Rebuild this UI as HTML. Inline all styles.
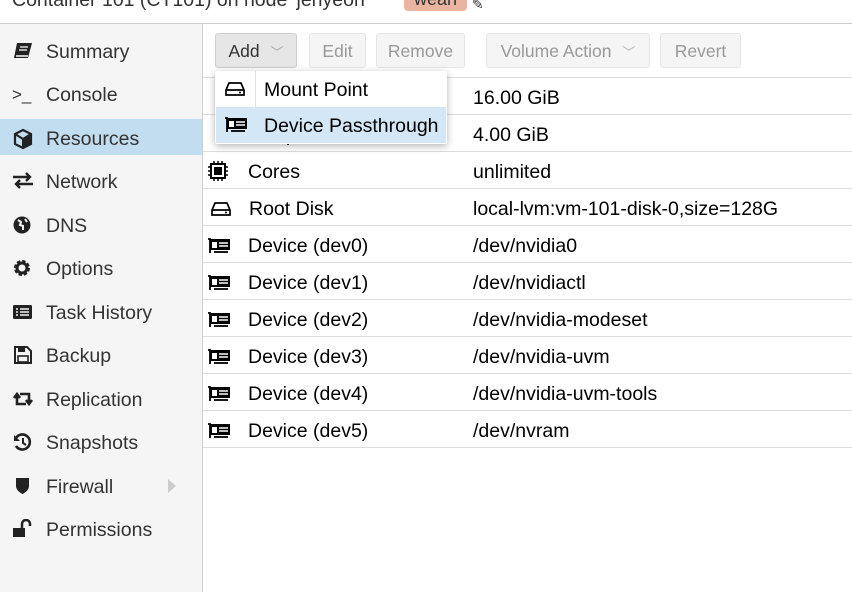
<!DOCTYPE html>
<html><head><meta charset="utf-8"><style>
*{box-sizing:border-box;margin:0;padding:0}
body{width:852px;height:592px;overflow:hidden;background:#fff;font-family:"Liberation Sans",sans-serif;position:relative;color:#000}
.hdr{position:absolute;left:0;top:0;width:852px;height:24px;border-bottom:1px solid #ccc;background:#fff}
.hdr .t{position:absolute;left:12px;top:-11px;font-size:19.5px;color:#333;white-space:nowrap}
.tag{position:absolute;left:404px;top:-6px;width:63px;height:17px;background:#eab5a0;border-radius:4px;font-size:18px;color:#333;text-align:center;line-height:10px;overflow:hidden}
.side{position:absolute;left:0;top:24px;width:203px;height:568px;background:#f5f5f5;border-right:1px solid #cfcfcf}
.it{position:absolute;left:0;width:202px;height:36px;font-size:19.5px;color:#333;line-height:40px}
.it span{position:absolute;left:46px}
.it svg{position:absolute;left:12px;top:9px}
.sel{background:#c2dcf0}
.btn{position:absolute;top:33px;height:35px;border:1px solid #e6e6e6;border-radius:3px;background:#f5f5f5;font-size:17.5px;color:#999;line-height:35px;text-align:center}
.row{position:absolute;left:203px;width:649px;height:37px;border-bottom:1px solid #ddd;font-size:19.5px;line-height:40px}
.row .n{position:absolute;left:45px}
.row .v{position:absolute;left:270px}
.row svg{position:absolute;left:4px;top:12px}
.menu{position:absolute;left:215px;top:71px;width:232px;height:73px;background:#fff;box-shadow:0 2px 8px rgba(0,0,0,.3);border-radius:2px}
.mi{position:absolute;left:1px;width:230px;height:36px;font-size:19.5px;line-height:39px}
.mi span{position:absolute;left:48px}
</style></head><body>
<div class="hdr"><div class="t">Container 101 (CT101) on node 'jenyeon'</div><div class="tag">wean</div><div style="position:absolute;left:472px;top:-4px;font-size:14px;color:#333">✎</div></div>
<div class="side">
<div class="it" style="top:8px"><svg width="22" height="20" viewBox="0 0 22 20"><path d="M5 2h15l-4 15H2z" fill="#222"/><path d="M4 15h12" stroke="#fff" stroke-width="1.5"/><path d="M8 6h8M7 9h8" stroke="#fff" stroke-width="1.3"/></svg><span>Summary</span></div>
<div class="it" style="top:51px"><span style="left:12px;font-size:17px">&gt;_</span><span>Console</span></div>
<div class="it sel" style="top:95px"><svg width="22" height="22" viewBox="0 0 22 22"><path d="M11 2l8 4v10l-8 4-8-4V6z" fill="none" stroke="#222" stroke-width="2.2"/><path d="M11 11l8-5M11 11v9M11 11L3 6" stroke="#222" stroke-width="2"/><path d="M11 11v9l8-4V6z" fill="#222"/></svg><span>Resources</span></div>
<div class="it" style="top:138px"><svg width="22" height="20" viewBox="0 0 22 20"><path d="M1 6h17M14 2l4 4-4 4M21 13H4M8 9l-4 4 4 4" stroke="#222" stroke-width="2.4" fill="none"/></svg><span>Network</span></div>
<div class="it" style="top:182px"><svg width="22" height="20" viewBox="0 0 22 20"><circle cx="10" cy="10" r="8.5" fill="#222"/><path d="M6 5l3 2-1 3 3 1 0 4M13 4l2 3" stroke="#f5f5f5" stroke-width="2" fill="none"/></svg><span>DNS</span></div>
<div class="it" style="top:225px"><svg width="22" height="20" viewBox="0 0 22 20"><circle cx="10" cy="10" r="6" fill="none" stroke="#222" stroke-width="4" stroke-dasharray="3 1.7"/><circle cx="10" cy="10" r="5" fill="none" stroke="#222" stroke-width="3"/></svg><span>Options</span></div>
<div class="it" style="top:269px"><svg width="22" height="20" viewBox="0 0 22 20"><rect x="1" y="3" width="19" height="14" rx="1.5" fill="#222"/><path d="M4 7h2M8 7h9M4 10h2M8 10h9M4 13h2M8 13h9" stroke="#f5f5f5" stroke-width="1.4"/></svg><span>Task History</span></div>
<div class="it" style="top:312px"><svg width="22" height="20" viewBox="0 0 22 20"><path d="M3 2h12l4 4v12H3z" fill="none" stroke="#222" stroke-width="2"/><rect x="6" y="3" width="7" height="4" fill="#222"/><rect x="6" y="11" width="10" height="6" fill="none" stroke="#222" stroke-width="1.6"/></svg><span>Backup</span></div>
<div class="it" style="top:356px"><svg width="22" height="20" viewBox="0 0 22 20"><path d="M2 9l3-4 3 4M5 6v9h9M20 11l-3 4-3-4M17 14V5H8" stroke="#222" stroke-width="2.6" fill="none"/></svg><span>Replication</span></div>
<div class="it" style="top:399px"><svg width="22" height="20" viewBox="0 0 22 20"><path d="M4 6a7.5 7.5 0 1 1 0 8" stroke="#222" stroke-width="2.6" fill="none"/><path d="M2 3v6h6z" fill="#222"/><path d="M11 6v5l3 2" stroke="#222" stroke-width="2" fill="none"/></svg><span>Snapshots</span></div>
<div class="it" style="top:443px"><svg width="22" height="20" viewBox="0 0 22 20"><path d="M4 2h13v8c0 5-6.5 8-6.5 8S4 15 4 10z" fill="#222"/></svg><span>Firewall</span><div style="position:absolute;left:168px;top:12px;width:0;height:0;border-left:8px solid #ccc;border-top:7px solid transparent;border-bottom:7px solid transparent"></div></div>
<div class="it" style="top:486px"><svg width="22" height="20" viewBox="0 0 22 20"><rect x="1" y="9" width="12" height="9" fill="#222"/><path d="M10 9V5a4 4 0 0 1 8 0v2" stroke="#222" stroke-width="2.5" fill="none"/></svg><span>Permissions</span></div>
</div>
<div class="btn" style="left:215px;width:82px;background:#e6e6e6;border-color:#ccc;color:#333">Add <span style="color:#aaa;font-size:13px;margin-left:6px">﹀</span></div>
<div class="btn" style="left:309px;width:57px">Edit</div>
<div class="btn" style="left:376px;width:89px">Remove</div>
<div class="btn" style="left:486px;width:164px">Volume Action <span style="color:#bbb;font-size:13px;margin-left:6px">﹀</span></div>
<div class="btn" style="left:660px;width:81px">Revert</div>
<div style="position:absolute;left:203px;top:77px;width:649px;border-top:1px solid #ddd"></div>
<svg width="0" height="0" style="position:absolute"><defs>
<symbol id="dev" viewBox="0 0 24 16"><path d="M1 1h2v14" stroke="#000" stroke-width="1.8" fill="none"/><rect x="3" y="1" width="20" height="11" fill="#000"/><rect x="5" y="4" width="5" height="6" fill="#fff"/><path d="M12 5h9M12 8h9" stroke="#fff" stroke-width="1.4"/><path d="M7 14h14" stroke="#000" stroke-width="1.8"/></symbol>
<symbol id="disk" viewBox="0 0 22 16"><path d="M5 2h12l3 7v5H2V9z M2 9h18" stroke="#000" stroke-width="1.7" fill="none"/><circle cx="16" cy="11.5" r="1" fill="#000"/></symbol>
</defs></svg>
<div class="row" style="top:78px"><span class="n">Memory</span><span class="v">16.00 GiB</span></div>
<div class="row" style="top:115px"><span class="n">Swap</span><span class="v">4.00 GiB</span></div>
<div class="row" style="top:152px"><svg width="22" height="22" viewBox="0 0 22 22" style="top:8px"><rect x="4" y="4" width="14" height="14" fill="none" stroke="#000" stroke-width="2"/><rect x="7" y="7" width="8" height="8" fill="#000"/><path d="M7 1v3M11 1v3M15 1v3M7 18v3M11 18v3M15 18v3M1 7h3M1 11h3M1 15h3M18 7h3M18 11h3M18 15h3" stroke="#000" stroke-width="1.5"/></svg><span class="n">Cores</span><span class="v">unlimited</span></div>
<div class="row" style="top:189px"><svg width="22" height="16" style="left:7px"><use href="#disk"/></svg><span class="n" style="left:46px">Root Disk</span><span class="v">local-lvm:vm-101-disk-0,size=128G</span></div>
<div class="row" style="top:226px"><svg width="24" height="16"><use href="#dev"/></svg><span class="n">Device (dev0)</span><span class="v">/dev/nvidia0</span></div>
<div class="row" style="top:263px"><svg width="24" height="16"><use href="#dev"/></svg><span class="n">Device (dev1)</span><span class="v">/dev/nvidiactl</span></div>
<div class="row" style="top:300px"><svg width="24" height="16"><use href="#dev"/></svg><span class="n">Device (dev2)</span><span class="v">/dev/nvidia-modeset</span></div>
<div class="row" style="top:337px"><svg width="24" height="16"><use href="#dev"/></svg><span class="n">Device (dev3)</span><span class="v">/dev/nvidia-uvm</span></div>
<div class="row" style="top:374px"><svg width="24" height="16"><use href="#dev"/></svg><span class="n">Device (dev4)</span><span class="v">/dev/nvidia-uvm-tools</span></div>
<div class="row" style="top:411px"><svg width="24" height="16"><use href="#dev"/></svg><span class="n">Device (dev5)</span><span class="v">/dev/nvram</span></div>
<div class="menu">
<div class="mi" style="top:0"><svg width="22" height="16" style="position:absolute;left:8px;top:10px"><use href="#disk"/></svg><div style="position:absolute;left:39px;top:0;height:36px;border-left:1px solid #e0e0e0"></div><span>Mount Point</span></div>
<div class="mi" style="top:36px;background:#d4e7f6"><svg width="24" height="16" style="position:absolute;left:8px;top:10px"><use href="#dev"/></svg><span>Device Passthrough</span></div>
</div>
</body></html>
